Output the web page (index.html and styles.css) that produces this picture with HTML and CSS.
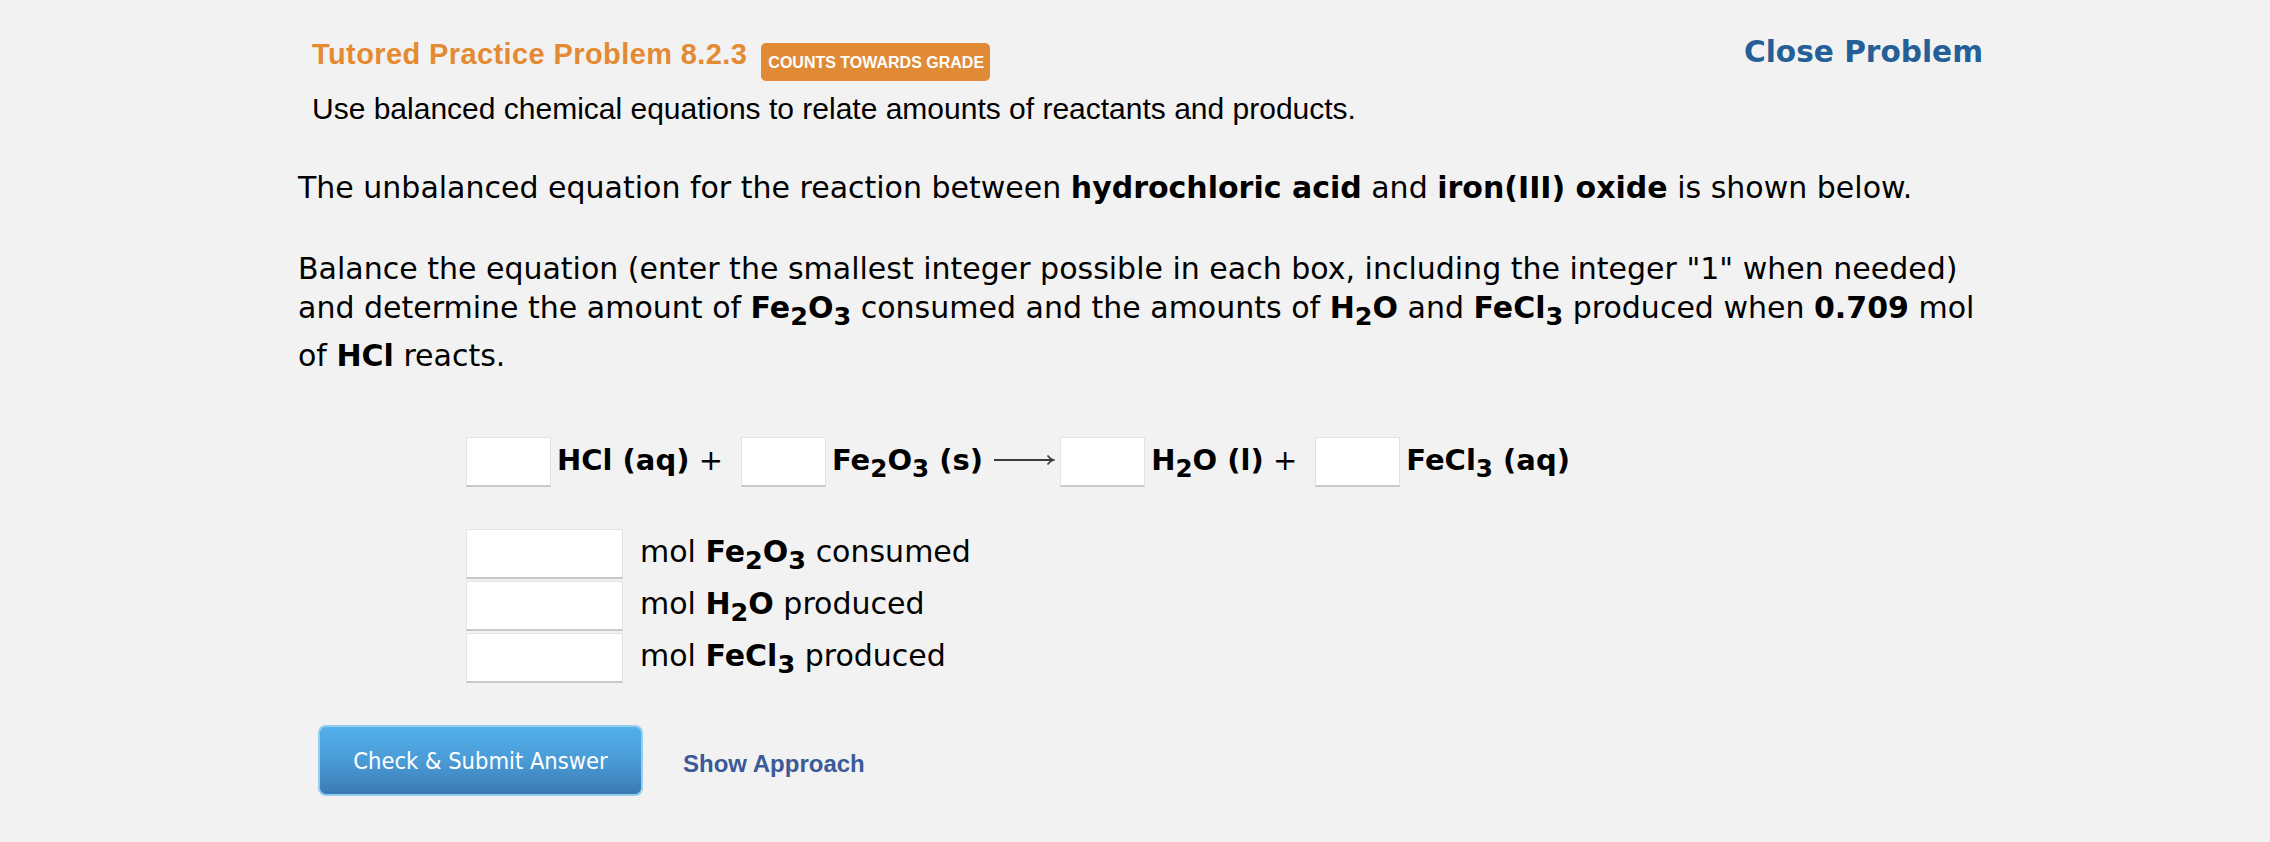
FILE: index.html
```html
<!DOCTYPE html>
<html lang="en">
<head>
<meta charset="utf-8">
<title>Tutored Practice Problem 8.2.3</title>
<link rel="stylesheet" href="styles.css">
</head>
<body>
<div class="page">
  <header class="header">
    <div class="header-main">
      <div class="title-row">
        <h1 class="title">Tutored Practice Problem 8.2.3</h1>
        <span class="badge">COUNTS TOWARDS GRADE</span>
      </div>
      <p class="subtitle">Use balanced chemical equations to relate amounts of reactants and products.</p>
    </div>
    <a class="close-link" href="#">Close Problem</a>
  </header>

  <section class="question">
    <p class="para">The unbalanced equation for the reaction between <b>hydrochloric acid</b> and <b>iron(III) oxide</b> is shown below.</p>
    <p class="para para-2">Balance the equation (enter the smallest integer possible in each box, including the integer "1" when needed) and determine the amount of <b>Fe<sub>2</sub>O<sub>3</sub></b> consumed and the amounts of <b>H<sub>2</sub>O</b> and <b>FeCl<sub>3</sub></b> produced when <b>0.709</b> mol of <b>HCl</b> reacts.</p>

    <div class="equation">
      <input class="box box-coef" type="text">
      <span class="species"><b>HCl (aq)</b> +</span>
      <input class="box box-coef" type="text">
      <span class="species species-last"><b>Fe<sub>2</sub>O<sub>3</sub> (s)</b></span>
      <svg class="arrow" width="61" height="14" viewBox="0 0 61 14"><path d="M0 7 H58" stroke="#3a3a3a" stroke-width="1.8" fill="none"/><path d="M53.5 2.5 Q56 6 59.5 7 Q56 8 53.5 11.5" stroke="#3a3a3a" stroke-width="1.6" fill="none"/></svg>
      <input class="box box-coef" type="text">
      <span class="species"><b>H<sub>2</sub>O (l)</b> +</span>
      <input class="box box-coef" type="text">
      <span class="species species-last"><b>FeCl<sub>3</sub> (aq)</b></span>
    </div>

    <div class="answers">
      <div class="answer-row">
        <input class="box box-answer" type="text">
        <span class="answer-label">mol <b>Fe<sub>2</sub>O<sub>3</sub></b> consumed</span>
      </div>
      <div class="answer-row">
        <input class="box box-answer" type="text">
        <span class="answer-label">mol <b>H<sub>2</sub>O</b> produced</span>
      </div>
      <div class="answer-row">
        <input class="box box-answer" type="text">
        <span class="answer-label">mol <b>FeCl<sub>3</sub></b> produced</span>
      </div>
    </div>
  </section>

  <div class="actions">
    <button class="submit-btn" type="button">Check &amp; Submit Answer</button>
    <a class="approach-link" href="#">Show Approach</a>
  </div>
</div>
</body>
</html>
```

FILE: styles.css
```css
html, body {
  margin: 0;
  padding: 0;
  background: #f2f2f2;
}

body {
  font-family: "DejaVu Sans", Verdana, sans-serif;
  color: #000;
}

.page {
  width: 1700px;
  margin: 0 auto;
}

/* Header */
.header {
  display: flex;
  justify-content: space-between;
  align-items: flex-start;
  padding: 35px 2px 0 27px;
}

.title-row {
  display: flex;
  align-items: flex-start;
  gap: 14px;
}

.title {
  margin: 3px 0 0 0;
  font-family: "Liberation Sans", Arial, sans-serif;
  font-weight: bold;
  font-size: 29px;
  line-height: 33px;
  letter-spacing: 0.4px;
  color: #e38a33;
}

.badge {
  margin-top: 8px;
  height: 38px;
  padding: 1px 6px 0 7px;
  box-sizing: border-box;
  background: #e08a36;
  border-radius: 5px;
  color: #fff;
  font-family: "Liberation Sans", Arial, sans-serif;
  font-weight: bold;
  font-size: 16px;
  line-height: 37px;
  white-space: nowrap;
}

.subtitle {
  margin: 11px 0 0 0;
  font-family: "Liberation Sans", Arial, sans-serif;
  font-size: 30px;
  line-height: 34px;
}

.close-link {
  font-family: "DejaVu Sans", Verdana, sans-serif;
  font-weight: bold;
  font-size: 29.6px;
  line-height: 35px;
  color: #255f97;
  text-decoration: none;
}

/* Question */
.question {
  padding-left: 13px;
  width: 1712px;
  box-sizing: border-box;
}

.para {
  margin: 42px 0 0 0;
  font-size: 30px;
  line-height: 39px;
}

.para-2 {
  margin-top: 42px;
}

.roman {
  letter-spacing: 1px;
}

b {
  font-weight: bold;
}

sub {
  font-size: 0.85em;
}

/* Equation */
.equation {
  display: flex;
  align-items: flex-start;
  margin: 62px 0 0 168px;
}

.box {
  display: block;
  margin: 0;
  padding: 0;
  height: 50px;
  box-sizing: border-box;
  background: #fff;
  border: 1px solid #e3e3e3;
  border-bottom: 2px solid #c8c8c8;
  outline: none;
}

.box-coef {
  width: 85px;
}

.species {
  margin: 0 18px 0 6px;
  font-size: 29px;
  line-height: 46px;
  white-space: nowrap;
}

.species-last {
  margin-right: 11px;
}

.species sub {
  line-height: 0;
}

.arrow {
  margin: 16px 5px 0 0;
}

/* Answers */
.answers {
  display: flex;
  flex-direction: column;
  gap: 2px;
  margin: 42px 0 0 168px;
}

.answer-row {
  display: flex;
  align-items: flex-start;
  gap: 17px;
}

.box-answer {
  width: 157px;
}

.answer-label {
  font-size: 30px;
  line-height: 45px;
}

.answer-label sub {
  line-height: 0;
}

/* Actions */
.actions {
  display: flex;
  align-items: center;
  gap: 40px;
  margin: 42px 0 0 33px;
}

.submit-btn {
  width: 325px;
  height: 71px;
  padding: 0;
  border: 2px solid #94cdee;
  border-radius: 8px;
  background: linear-gradient(to bottom, #52b0ea 0%, #4a9bd6 50%, #3a7ab5 100%);
  color: #fff;
  font-family: "DejaVu Sans Condensed", Tahoma, sans-serif;
  font-size: 23.5px;
  cursor: pointer;
}

.approach-link {
  margin-top: 6px;
  font-family: "Liberation Sans", Arial, sans-serif;
  font-weight: bold;
  font-size: 24px;
  color: #3a5a98;
  text-decoration: none;
}
```
